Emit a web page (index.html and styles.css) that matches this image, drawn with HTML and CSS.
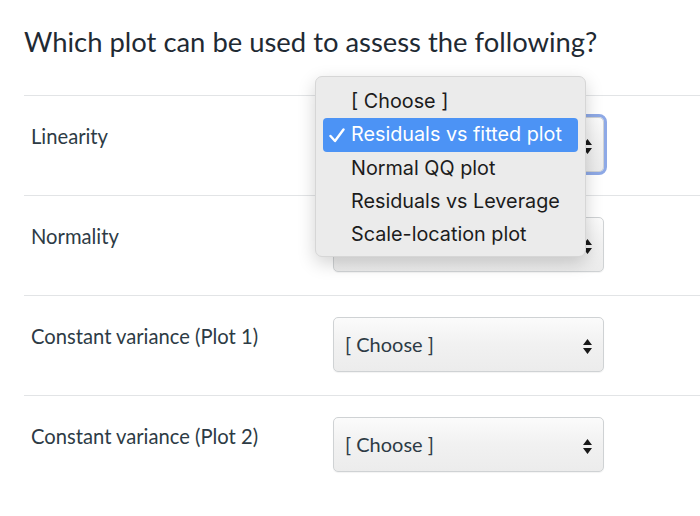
FILE: index.html
```html
<!DOCTYPE html>
<html>
<head>
<meta charset="utf-8">
<link rel="stylesheet" href="styles.css">
</head>
<body>
<div class="page">
  <h1 class="title">Which plot can be used to assess the following?</h1>
  <div class="rows">
    <div class="row">
      <div class="label">Linearity</div>
      <div class="select focused"><span class="value"></span><span class="arrows"><svg width="9" height="15" viewBox="0 0 9 15"><path d="M4.5 0 L9 6 L0 6 Z M0 9 L9 9 L4.5 15 Z" fill="#1a1a1a"/></svg></span></div>
    </div>
    <div class="row">
      <div class="label">Normality</div>
      <div class="select"><span class="value"></span><span class="arrows"><svg width="9" height="15" viewBox="0 0 9 15"><path d="M4.5 0 L9 6 L0 6 Z M0 9 L9 9 L4.5 15 Z" fill="#1a1a1a"/></svg></span></div>
    </div>
    <div class="row">
      <div class="label">Constant variance (Plot 1)</div>
      <div class="select"><span class="value">[ Choose ]</span><span class="arrows"><svg width="9" height="15" viewBox="0 0 9 15"><path d="M4.5 0 L9 6 L0 6 Z M0 9 L9 9 L4.5 15 Z" fill="#1a1a1a"/></svg></span></div>
    </div>
    <div class="row last">
      <div class="label">Constant variance (Plot 2)</div>
      <div class="select"><span class="value">[ Choose ]</span><span class="arrows"><svg width="9" height="15" viewBox="0 0 9 15"><path d="M4.5 0 L9 6 L0 6 Z M0 9 L9 9 L4.5 15 Z" fill="#1a1a1a"/></svg></span></div>
    </div>
  </div>
  <ul class="menu">
    <li class="item">[ Choose ]</li>
    <li class="item selected"><svg class="check" width="16" height="15" viewBox="0 0 16 15"><path d="M1.5 8 L6 13 L14.5 1.5" fill="none" stroke="#ffffff" stroke-width="2.4" stroke-linecap="round" stroke-linejoin="round"/></svg>Residuals vs fitted plot</li>
    <li class="item">Normal QQ plot</li>
    <li class="item">Residuals vs Leverage</li>
    <li class="item">Scale-location plot</li>
  </ul>
</div>
</body>
</html>
```
FILE: styles.css
```css
html, body {
  margin: 0;
  padding: 0;
  background: #ffffff;
}
body {
  font-family: Lato, "Liberation Sans", sans-serif;
  color: #2d3b45;
  width: 700px;
  height: 516px;
  overflow: hidden;
}
.page {
  position: relative;
  padding: 24px 0 0 24px;
}
.title {
  margin: 0;
  font-size: 27.4px;
  font-weight: 400;
  line-height: 36px;
  height: 71px;
  color: #1f2a33;
}
.rows {
  display: flex;
  flex-direction: column;
}
.row {
  display: flex;
  align-items: flex-start;
  border-top: 1px solid #e2e4e6;
  height: 99px;
}
.label {
  width: 302px;
  padding-left: 7px;
  font-size: 20.2px;
  line-height: 24px;
  padding-top: 28px;
}
.select {
  margin-top: 21px;
  width: 271px;
  height: 55px;
  box-sizing: border-box;
  border: 1px solid #cfd2d4;
  border-radius: 5px;
  background: linear-gradient(#fbfbfb, #f1f1f1 50%, #ececec);
  display: flex;
  align-items: center;
  padding: 0 11px 0 11px;
  font-size: 20px;
  box-shadow: 0 1px 1px rgba(0,0,0,0.05);
}
.select .value {
  flex: 1;
  padding-bottom: 1px;
  white-space: nowrap;
  overflow: hidden;
}
.select .arrows {
  display: flex;
  padding-top: 3px;
}
.select.focused {
  outline: 3px solid #8ea9e6;
  outline-offset: 0;
}
.menu {
  position: absolute;
  left: 315px;
  top: 76px;
  width: 271px;
  height: 181px;
  box-sizing: border-box;
  margin: 0;
  padding: 8px 7px;
  list-style: none;
  background: #ebebeb;
  border: 1px solid #d6d6d6;
  border-radius: 7px;
  box-shadow: 0 6px 18px rgba(0,0,0,0.18);
  font-family: Inter, "Noto Sans", sans-serif;
  font-size: 19.8px;
  color: #1c1c1c;
}
.item {
  position: relative;
  height: 33.3px;
  line-height: 33px;
  padding-left: 28px;
  border-radius: 4px;
  white-space: nowrap;
}
.item.selected {
  background: #4c93f5;
  color: #ffffff;
}
.check {
  position: absolute;
  left: 6px;
  top: 10px;
}
```
